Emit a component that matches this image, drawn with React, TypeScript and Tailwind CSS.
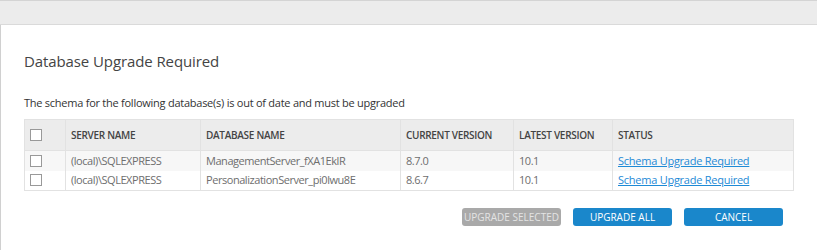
import React from "react";

const rows = [
  { server: "(local)\\SQLEXPRESS", db: "ManagementServer_fXA1EklR", cur: "8.7.0", latest: "10.1" },
  { server: "(local)\\SQLEXPRESS", db: "PersonalizationServer_pi0lwu8E", cur: "8.6.7", latest: "10.1" },
];

function Box() {
  return <div className="w-[12px] h-[12px] border border-[#999] bg-white" />;
}

export default function App() {
  return (
    <div className="w-[817px] h-[250px] bg-white text-[#444] overflow-hidden" style={{ fontFamily: '"Open Sans", "Noto Sans", sans-serif' }}>
      <div className="h-[25px] bg-[#ececec] border-t border-t-[#d4d4d4] border-b border-b-[#dadada]" />
      <div className="h-[225px] border-l border-l-[#d0d0d0] pl-[23px]">
        <h1 className="pt-[26px] text-[15px] leading-[20px] tracking-[-0.1px] text-[#444]">Database Upgrade Required</h1>
        <p className="mt-[24px] text-[11px] leading-[16px] tracking-[-0.25px] text-[#333]">The schema for the following database(s) is out of date and must be upgraded</p>
        <table className="mt-[8px] border-collapse border border-[#e2e2e2] table-fixed text-[11px] tracking-[-0.45px]">
          <colgroup>
            <col className="w-[41px]" />
            <col className="w-[135px]" />
            <col className="w-[200px]" />
            <col className="w-[113px]" />
            <col className="w-[99px]" />
            <col className="w-[181px]" />
          </colgroup>
          <thead>
            <tr className="h-[31px] bg-[#ececec] text-[10px] font-semibold tracking-[-0.3px] text-[#444]">
              <th className="border border-[#e2e2e2] px-[5px]"><Box /></th>
              <th className="border border-[#e2e2e2] px-[5px] text-left font-semibold">SERVER NAME</th>
              <th className="border border-[#e2e2e2] px-[5px] text-left font-semibold">DATABASE NAME</th>
              <th className="border border-[#e2e2e2] px-[5px] text-left font-semibold">CURRENT VERSION</th>
              <th className="border border-[#e2e2e2] px-[5px] text-left font-semibold">LATEST VERSION</th>
              <th className="border border-[#e2e2e2] px-[5px] text-left font-semibold">STATUS</th>
            </tr>
          </thead>
          <tbody>
            {rows.map((r, i) => (
              <tr key={i} className={`h-[20px] text-[#6e6e6e] ${i === 0 ? "bg-[#f7f7f7]" : "bg-white"}`}>
                <td className="border-x border-[#e2e2e2] px-[5px]"><Box /></td>
                <td className="border-x border-[#e2e2e2] px-[5px]">{r.server}</td>
                <td className="border-x border-[#e2e2e2] px-[5px]">{r.db}</td>
                <td className="border-x border-[#e2e2e2] px-[5px]">{r.cur}</td>
                <td className="border-x border-[#e2e2e2] px-[5px]">{r.latest}</td>
                <td className="border-x border-[#e2e2e2] px-[5px]">
                  <a className="text-[#1e8ad6] underline tracking-[-0.25px]" href="#">Schema Upgrade Required</a>
                </td>
              </tr>
            ))}
          </tbody>
        </table>
        <div className="mt-[17px] flex gap-[12px] pl-[438px]">
          <button className="w-[99px] h-[18px] rounded-[3px] bg-[#a9a9a9] text-[#e4e4e4] text-[10px] leading-[18px]">UPGRADE SELECTED</button>
          <button className="w-[99px] h-[18px] rounded-[3px] bg-[#1a87cb] text-white text-[10px] leading-[18px]">UPGRADE ALL</button>
          <button className="w-[99px] h-[18px] rounded-[3px] bg-[#1a87cb] text-white text-[10px] leading-[18px]">CANCEL</button>
        </div>
      </div>
    </div>
  );
}
